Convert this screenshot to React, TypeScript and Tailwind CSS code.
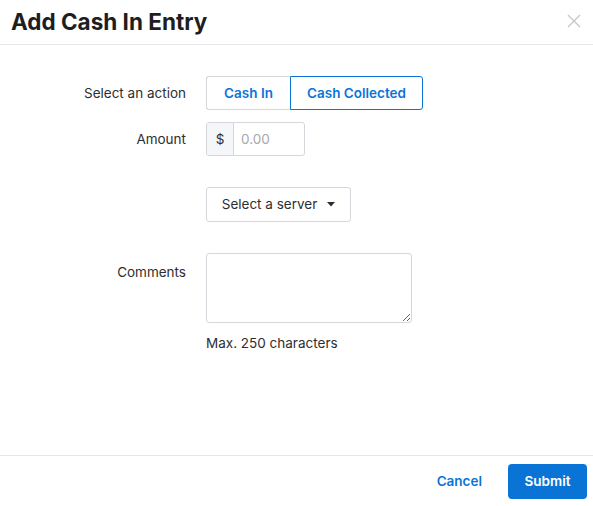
import { useState } from "react";

const font = { fontFamily: "Inter, 'Liberation Sans', sans-serif" };

const App = () => {
  const [action, setAction] = useState("collected");

  return (
    <div className="w-[593px] h-[506px] bg-white flex flex-col text-[13.5px] text-[#2e2e30]" style={font}>
      <div className="h-[45px] shrink-0 border-b border-[#e6e6e9] flex items-center justify-between pl-[11px] pr-[12px]">
        <h1 className="text-[22.5px] font-bold text-[#1e1e1e] pb-[1px]">Add Cash In Entry</h1>
        <button type="button" className="text-[#c8c8cc] mb-[2px]">
          <svg width="14" height="14" viewBox="0 0 14 14" stroke="currentColor" strokeWidth="1.4">
            <path d="M1 1 13 13M13 1 1 13" />
          </svg>
        </button>
      </div>

      <div className="flex-1 flex flex-col pt-[31px]">
        <div className="flex items-center">
          <div className="w-[186px] text-right">Select an action</div>
          <div className="ml-[20px] flex h-[34px]">
            <button
              type="button"
              onClick={() => setAction("in")}
              className={`w-[84px] rounded-l-[3px] font-semibold text-[#0a74d6] border ${action === "in" ? "border-[#0a74d6]" : "border-[#d6d6dc] border-r-0"}`}
            >
              Cash In
            </button>
            <button
              type="button"
              onClick={() => setAction("collected")}
              className={`w-[133px] rounded-r-[3px] font-semibold text-[#0a74d6] border ${action === "collected" ? "border-[#0a74d6]" : "border-[#d6d6dc] border-l-0"}`}
            >
              Cash Collected
            </button>
          </div>
        </div>

        <div className="flex items-center mt-[12px]">
          <div className="w-[186px] text-right">Amount</div>
          <div className="ml-[20px] flex h-[34px] w-[99px] border border-[#d6d6dc] rounded-[3px] overflow-hidden">
            <span className="w-[27px] bg-[#f5f6fa] border-r border-[#d6d6dc] flex items-center justify-center">$</span>
            <input
              placeholder="0.00"
              className="w-0 flex-1 px-[7px] outline-none placeholder:text-[#a8a8ae]"
            />
          </div>
        </div>

        <div className="flex mt-[31px]">
          <div className="w-[186px]" />
          <button
            type="button"
            className="ml-[20px] h-[35px] w-[145px] border border-[#d6d6dc] rounded-[3px] flex items-center justify-center gap-[10px]"
          >
            Select a server
            <svg width="8" height="5" viewBox="0 0 8 5" fill="currentColor">
              <path d="M0 0h8L4 4.5z" />
            </svg>
          </button>
        </div>

        <div className="flex mt-[31px]">
          <div className="w-[186px] text-right pt-[9px]">Comments</div>
          <div className="ml-[20px] flex flex-col">
            <textarea className="w-[206px] h-[70px] border border-[#d6d6dc] rounded-[3px] outline-none px-[8px] py-[6px]" />
            <span className="mt-[10px]">Max. 250 characters</span>
          </div>
        </div>
      </div>

      <div className="h-[51px] shrink-0 border-t border-[#e6e6e9] flex items-start justify-end pt-[8px] pr-[6px] gap-[26px]">
        <button type="button" className="h-[35px] font-semibold text-[#0a74d6]">Cancel</button>
        <button type="button" className="h-[35px] w-[79px] rounded-[4px] bg-[#0a74d6] text-white font-semibold">Submit</button>
      </div>
    </div>
  );
};

export default App;
